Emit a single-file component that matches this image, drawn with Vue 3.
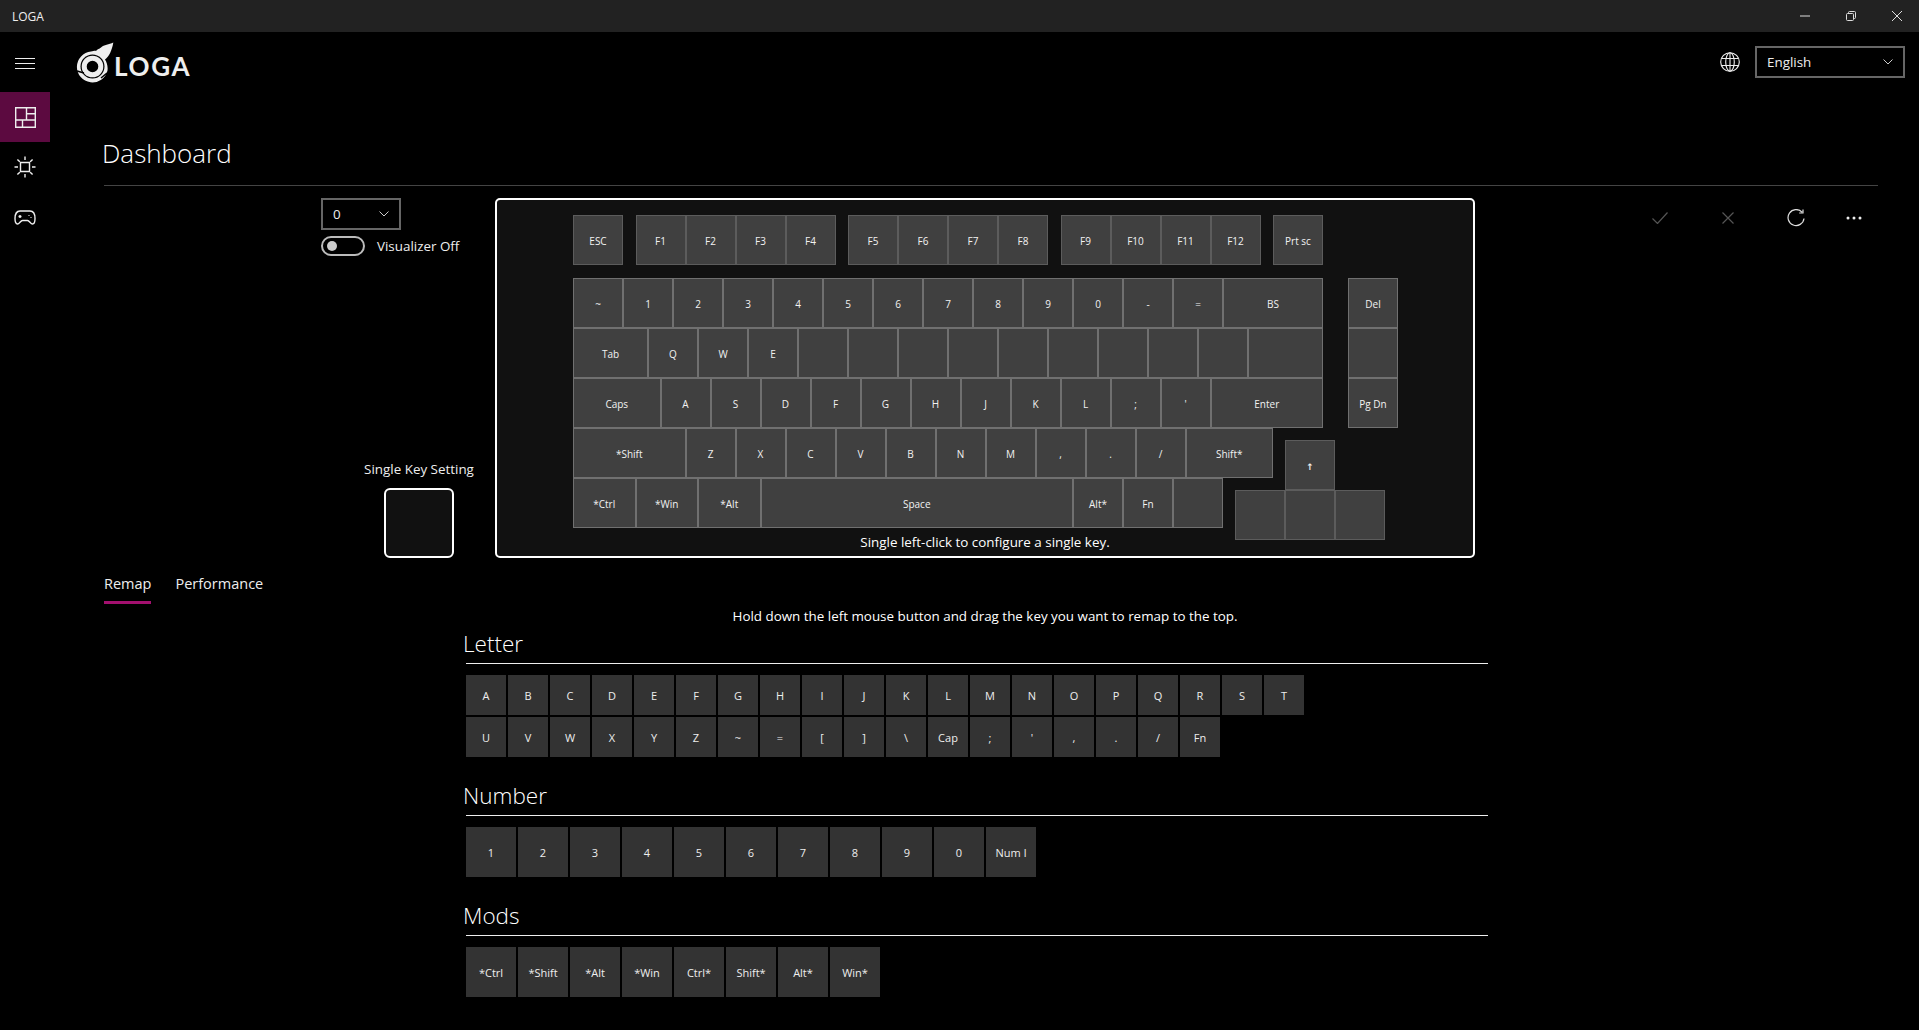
<template>
  <div class="ventana">
    <div class="barra-titulo">
      <span class="titulo-app">LOGA</span>
      <div class="controles">
        <svg width="12" height="12" viewBox="0 0 12 12"><path d="M1 6h10" stroke="#ddd" fill="none" /></svg>
        <svg width="12" height="12" viewBox="0 0 12 12"><path d="M1.5 4.5a1 1 0 0 1 1-1h5a1 1 0 0 1 1 1v5a1 1 0 0 1-1 1h-5a1 1 0 0 1-1-1zM3.5 3.5v-1a1 1 0 0 1 1-1h5a1 1 0 0 1 1 1v5a1 1 0 0 1-1 1h-1" stroke="#ddd" fill="none" /></svg>
        <svg width="12" height="12" viewBox="0 0 12 12"><path d="M1 1l10 10M11 1L1 11" stroke="#ddd" fill="none" /></svg>
      </div>
    </div>

    <div class="cuerpo">
      <nav class="lateral">
        <div class="hamburguesa">
          <svg width="20" height="12" viewBox="0 0 20 12"><path d="M0 .5h20M0 5.5h20M0 10.5h20" stroke="#eee" fill="none" /></svg>
        </div>
        <div class="nav-item activo">
          <svg width="21" height="21" viewBox="0 0 21 21" fill="none" stroke="#eee" stroke-width="1.4">
            <path d="M.7.7h19.6v19.6H.7zM11.5.7v12.3M.7 13h19.6M7.5 13v7.3M11.5 6.7h8.8" />
          </svg>
        </div>
        <div class="nav-item">
          <svg width="22" height="22" viewBox="0 0 22 22" fill="none" stroke="#eee" stroke-width="1.4">
            <path d="M6.5 6.5h9v9h-9zM11 .5v3.5M11 18v3.5M.5 11H4M18 11h3.5M3.4 3.4l2.4 2.4M16.2 16.2l2.4 2.4M18.6 3.4l-2.4 2.4M5.8 16.2l-2.4 2.4" />
          </svg>
        </div>
        <div class="nav-item">
          <svg width="22" height="15" viewBox="0 0 22 15" fill="none" stroke="#eee" stroke-width="1.4">
            <path d="M6 1h10c3 0 5 3 5 7.500 0 3-.8 5.500-2.500 5.500-2 0-3-3.500-5-3.500H8.500c-2 0-3 3.500-5 3.500C1.800 14 1 11.500 1 8.500 1 4 3 1 6 1z" />
            <path d="M4.500 6.500h3M6 5v3M15 5.200v.8M17 7.200v.8" />
          </svg>
        </div>
      </nav>

      <main class="principal">
        <header class="cabecera">
          <div class="logo">
            <svg width="38" height="42" viewBox="0 0 38 42">
              <path fill="#eee" d="M37.300.5C33 2.500 28 2.500 25 5.500c-2 2-3 1-5 3.500-1-.5-3 .5-5 .5a15.500 15.500 0 1 0 16.500 19c.5-4-.5-8-2.500-11C33 14.500 36 8.500 37.300.5z" />
              <circle cx="16.500" cy="24.500" r="12" fill="#000" />
              <circle cx="16.500" cy="24.500" r="8.300" fill="none" stroke="#eee" stroke-width="5" />
              <path d="M1 29l7 2M25 36l6-5" stroke="#000" stroke-width="1.500" />
            </svg>
            <span class="logo-texto">LOGA</span>
          </div>
          <div class="idioma">
            <svg width="20" height="20" viewBox="0 0 20 20" fill="none" stroke="#eee" stroke-width="1.1">
              <circle cx="10" cy="10" r="9.300" />
              <ellipse cx="10" cy="10" rx="4.300" ry="9.300" />
              <path d="M10 .7v18.600M1.800 6.500h16.400M1.800 13.500h16.400" />
            </svg>
            <div class="combo combo-idioma">
              <span>English</span>
              <svg class="flecha" width="10" height="6" viewBox="0 0 10 6"><path d="M.5.5L5 5 9.500.5" fill="none" stroke="#ccc" /></svg>
            </div>
          </div>
        </header>

        <h1 class="titulo">Dashboard</h1>

        <section class="superior">
          <div class="col-izq">
            <div class="combo combo-perfil">
              <span>0</span>
              <svg class="flecha" width="10" height="6" viewBox="0 0 10 6"><path d="M.5.5L5 5 9.500.5" fill="none" stroke="#ccc" /></svg>
            </div>
            <div class="visualizer">
              <span class="toggle"><span class="perilla"></span></span>
              <span>Visualizer Off</span>
            </div>
            <div class="single-key">
              <span>Single Key Setting</span>
              <div class="caja-key"></div>
            </div>
          </div>

          <div class="panel">
            <div class="teclado">
              <div class="bloque-main">
                <div class="fila fila-f">
                  <div v-for="grupo in filaF" :key="grupo[0]" class="grupo-f">
                    <div v-for="t in grupo" :key="t" class="tecla tecla-f">{{ t }}</div>
                  </div>
                </div>
                <div v-for="(fila, i) in filas" :key="i" class="fila">
                  <div v-for="(t, j) in fila" :key="j" class="tecla" :style="{ width: t[1] + 'px' }">{{ t[0] }}</div>
                </div>
                <div class="inferior">
                  <div class="bloque-bajo">
                    <div v-for="(fila, i) in filasBajas" :key="i" class="fila">
                      <div v-for="(t, j) in fila" :key="j" class="tecla" :style="{ width: t[1] + 'px' }">{{ t[0] }}</div>
                    </div>
                  </div>
                  <div class="flechas">
                    <div class="tecla tecla-f tecla-arriba">↑</div>
                    <div class="flechas-abajo">
                      <div class="tecla tecla-f"></div>
                      <div class="tecla tecla-f"></div>
                      <div class="tecla tecla-f"></div>
                    </div>
                  </div>
                </div>
              </div>
              <div class="bloque-lado">
                <div class="tecla">Del</div>
                <div class="tecla"></div>
                <div class="tecla">Pg Dn</div>
              </div>
            </div>
            <p class="ayuda-panel">Single left-click to configure a single key.</p>
          </div>

          <div class="acciones">
            <div class="accion">
              <svg width="16" height="12" viewBox="0 0 16 12"><path d="M.5 6.500L5.500 11.500 15.500.5" fill="none" stroke="#555" stroke-width="1.200" /></svg>
            </div>
            <div class="accion">
              <svg width="12" height="12" viewBox="0 0 12 12"><path d="M.5.500l11 11M11.500.5l-11 11" fill="none" stroke="#555" stroke-width="1.200" /></svg>
            </div>
            <div class="accion">
              <svg width="18" height="18" viewBox="0 0 18 18" fill="none" stroke="#ddd" stroke-width="1.200"><path d="M15 3.200A8 8 0 1 0 17 9.500M16 .5v3.500h-3.800" /></svg>
            </div>
            <div class="accion accion-fin">
              <svg width="16" height="4" viewBox="0 0 16 4"><circle cx="2" cy="2" r="1.500" fill="#eee" /><circle cx="8" cy="2" r="1.500" fill="#eee" /><circle cx="14" cy="2" r="1.500" fill="#eee" /></svg>
            </div>
          </div>
        </section>

        <div class="pestanas">
          <span class="pestana activa">Remap</span>
          <span class="pestana">Performance</span>
        </div>

        <p class="ayuda">Hold down the left mouse button and drag the key you want to remap to the top.</p>

        <section class="seccion">
          <h2>Letter</h2>
          <hr />
          <div class="losetas letras">
            <div v-for="t in letras" :key="t" class="loseta chica">{{ t }}</div>
          </div>
        </section>

        <section class="seccion">
          <h2>Number</h2>
          <hr />
          <div class="losetas">
            <div v-for="t in numeros" :key="t" class="loseta">{{ t }}</div>
          </div>
        </section>

        <section class="seccion">
          <h2>Mods</h2>
          <hr />
          <div class="losetas">
            <div v-for="t in mods" :key="t" class="loseta">{{ t }}</div>
          </div>
        </section>
      </main>
    </div>
  </div>
</template>

<script setup>
const filaF = [
  ['ESC'],
  ['F1', 'F2', 'F3', 'F4'],
  ['F5', 'F6', 'F7', 'F8'],
  ['F9', 'F10', 'F11', 'F12'],
  ['Prt sc']
]

// ancho en px de cada tecla, 50 = 1u
const unidad = (lista) => lista.map((t) => [t, 50])

const filas = [
  [...unidad(['~', '1', '2', '3', '4', '5', '6', '7', '8', '9', '0', '-', '=']), ['BS', 100]],
  [['Tab', 75], ...unidad(['Q', 'W', 'E', '', '', '', '', '', '', '', '', '']), ['', 75]],
  [['Caps', 87.5], ...unidad(['A', 'S', 'D', 'F', 'G', 'H', 'J', 'K', 'L', ';', "'"]), ['Enter', 112.5]]
]

const filasBajas = [
  [['*Shift', 112.5], ...unidad(['Z', 'X', 'C', 'V', 'B', 'N', 'M', ',', '.', '/']), ['Shift*', 87.5]],
  [['*Ctrl', 62.5], ['*Win', 62.5], ['*Alt', 62.5], ['Space', 312.5], ['Alt*', 50], ['Fn', 50], ['', 50]]
]

const letras = [
  'A', 'B', 'C', 'D', 'E', 'F', 'G', 'H', 'I', 'J', 'K', 'L', 'M', 'N', 'O', 'P', 'Q', 'R', 'S', 'T',
  'U', 'V', 'W', 'X', 'Y', 'Z', '~', '=', '[', ']', '\\', 'Cap', ';', "'", ',', '.', '/', 'Fn'
]
const numeros = ['1', '2', '3', '4', '5', '6', '7', '8', '9', '0', 'Num l']
const mods = ['*Ctrl', '*Shift', '*Alt', '*Win', 'Ctrl*', 'Shift*', 'Alt*', 'Win*']
</script>

<style>
html,
body {
  margin: 0;
  background: #000;
  overflow: hidden;
}
</style>

<style scoped>
.ventana {
  width: 1919px;
  height: 1030px;
  background: #000;
  color: #eee;
  font-family: "Open Sans", "Noto Sans", sans-serif;
  font-size: 13.4px;
  overflow: hidden;
}

.barra-titulo {
  height: 32px;
  background: #222;
  display: flex;
  align-items: center;
  justify-content: space-between;
  padding-left: 12px;
}

.titulo-app {
  font-size: 12px;
}

.controles {
  display: flex;
  align-items: center;
  gap: 34px;
  padding-right: 16px;
}

.cuerpo {
  display: flex;
}

.lateral {
  width: 50px;
  flex: none;
}

.hamburguesa {
  height: 60px;
  padding-top: 4px;
  box-sizing: border-box;
  display: flex;
  align-items: center;
  justify-content: center;
}

.nav-item {
  height: 50px;
  display: flex;
  align-items: center;
  justify-content: center;
}

.nav-item.activo {
  background: #5c0a40;
}

.principal {
  flex: 1;
  min-width: 0;
  padding-left: 54px;
}

.cabecera {
  height: 60px;
  display: flex;
  justify-content: space-between;
  margin-left: -28px;
}

.logo {
  display: flex;
  align-items: flex-end;
  padding-top: 10px;
  height: 42px;
}

.logo-texto {
  font-family: Lato, sans-serif;
  font-weight: 700;
  font-size: 26px;
  line-height: 26px;
  letter-spacing: 1.7px;
  margin-bottom: 5px;
}

.idioma {
  display: flex;
  align-items: center;
  gap: 15px;
  padding: 14px 14px 0 0;
  height: 32px;
}

.combo {
  height: 32px;
  box-sizing: border-box;
  border: 2px solid #666;
  display: flex;
  align-items: center;
  justify-content: space-between;
  padding: 0 10px;
}

.combo-idioma {
  width: 150px;
}

.combo-perfil {
  width: 80px;
}

.titulo {
  margin: 0;
  height: 94px;
  box-sizing: border-box;
  border-bottom: 1px solid #444;
  width: 1774px;
  font-size: 26px;
  font-weight: 300;
  line-height: 38px;
  padding-top: 42px;
  text-indent: -2px;
  color: #fff;
}

.superior {
  display: flex;
  margin: 12px 0 0 217px;
  height: 360px;
}

.col-izq {
  width: 174px;
  flex: none;
  display: flex;
  flex-direction: column;
}

.visualizer {
  display: flex;
  align-items: center;
  gap: 12px;
  margin-top: 6px;
}

.toggle {
  width: 44px;
  height: 20px;
  box-sizing: border-box;
  border: 2px solid #bbb;
  border-radius: 10px;
  display: flex;
  align-items: center;
  padding-left: 4px;
}

.perilla {
  width: 10px;
  height: 10px;
  border-radius: 50%;
  background: #ccc;
}

.single-key {
  margin-top: auto;
  margin-left: 43px;
  width: 110px;
  display: flex;
  flex-direction: column;
  align-items: center;
  gap: 10px;
}

.single-key span {
  white-space: nowrap;
}

.caja-key {
  width: 70px;
  height: 70px;
  box-sizing: border-box;
  border: 2px solid #fff;
  border-radius: 6px;
  background: #111;
}

.panel {
  width: 980px;
  height: 360px;
  flex: none;
  box-sizing: border-box;
  border: 2px solid #fff;
  border-radius: 5px;
  background: #111;
  padding: 15px 0 0 76px;
}

.teclado {
  display: flex;
}

.bloque-main {
  width: 750px;
}

.bloque-lado {
  margin: 63px 0 0 25px;
}

.fila {
  display: flex;
}

.fila-f {
  justify-content: space-between;
  margin-bottom: 13px;
}

.grupo-f {
  display: flex;
}

.tecla {
  width: 50px;
  height: 50px;
  flex: none;
  box-sizing: border-box;
  border: 1px solid #707070;
  background: #404040;
  display: flex;
  align-items: center;
  justify-content: center;
  padding-top: 1px;
  font-size: 10px;
  font-weight: 500;
  color: #f2f2f2;
}

.tecla-f {
  border-color: #5c5c5c;
}

.tecla-arriba {
  font-family: "DejaVu Sans", sans-serif;
  font-weight: 700;
  font-size: 9px;
  padding-top: 3px;
}

.inferior {
  display: flex;
  height: 100px;
}

.bloque-bajo {
  width: 700px;
  flex: none;
}

.flechas {
  margin: 12px 0 0 -38px;
  width: 150px;
  display: flex;
  flex-direction: column;
  align-items: center;
}

.flechas-abajo {
  display: flex;
}

.ayuda-panel {
  margin: 5px 0 0 -76px;
  text-align: center;
  line-height: 19px;
  color: #fff;
}

.acciones {
  display: flex;
  margin-left: 151px;
  height: 40px;
}

.accion {
  width: 68px;
  display: flex;
  align-items: center;
  justify-content: center;
}

.accion-fin {
  width: 48px;
}

.pestanas {
  display: flex;
  gap: 24px;
  margin-top: 16px;
  font-size: 14.5px;
}

.pestana {
  padding-bottom: 7px;
  line-height: 20px;
  border-bottom: 3px solid transparent;
}

.pestana.activa {
  border-bottom-color: #a3106f;
}

.ayuda {
  margin: 3px 0 0 391px;
  width: 980px;
  text-align: center;
  line-height: 19px;
  color: #fff;
}

.seccion {
  margin: 20px 0 0 360px;
  width: 1024px;
}

.ayuda + .seccion {
  margin-top: -1px;
}

.seccion h2 {
  margin: 0 0 0 -1px;
  font-size: 22.5px;
  font-weight: 300;
  line-height: 38px;
  color: #fff;
}

.seccion hr {
  margin: 0 0 11px 2px;
  border: none;
  border-top: 1px solid #eee;
}

.losetas {
  display: flex;
  flex-wrap: wrap;
  gap: 2px;
  margin-left: 2px;
}

.loseta {
  width: 50px;
  height: 50px;
  background: #333;
  display: flex;
  align-items: center;
  justify-content: center;
  font-size: 11px;
  color: #eee;
}

.letras {
  width: 838px;
}

.loseta.chica {
  width: 40px;
  height: 40px;
}
</style>
